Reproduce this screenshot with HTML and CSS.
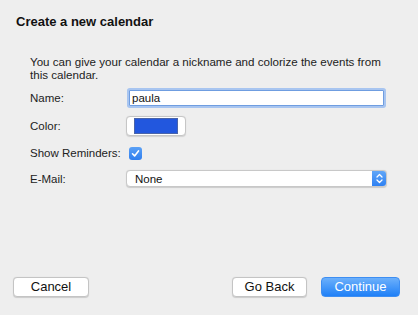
FILE: index.html
```html
<!DOCTYPE html>
<html>
<head>
<meta charset="utf-8">
<link rel="stylesheet" href="styles.css">
</head>
<body>
<div class="dialog">
  <div class="title">Create a new calendar</div>
  <div class="desc">You can give your calendar a nickname and colorize the events from this calendar.</div>
  <div class="form">
    <div class="label">Name:</div>
    <div class="cell"><div class="field">paula</div></div>
    <div class="label">Color:</div>
    <div class="cell"><div class="well"><div class="swatch"></div></div></div>
    <div class="label">Show Reminders:</div>
    <div class="cell"><div class="check"><svg width="13" height="13" viewBox="0 0 13 13"><path d="M3.5 6.8 L5.6 8.9 L9.5 3.9" fill="none" stroke="#fff" stroke-width="1.6" stroke-linecap="round" stroke-linejoin="round"/></svg></div></div>
    <div class="label">E-Mail:</div>
    <div class="cell"><div class="popup"><span class="popup-text">None</span><span class="stepper"><svg width="15" height="17" viewBox="0 0 15 17"><path d="M5 7 L7.5 4.5 L10 7 M5 10 L7.5 12.5 L10 10" fill="none" stroke="#fff" stroke-width="1.3" stroke-linecap="round" stroke-linejoin="round"/></svg></span></div></div>
  </div>
  <div class="footer">
    <div class="btn cancel">Cancel</div>
    <div class="btn back">Go Back</div>
    <div class="btn primary">Continue</div>
  </div>
</div>
</body>
</html>
```
FILE: styles.css
```css
html, body {
  margin: 0;
  padding: 0;
  background: #eeeeee;
}
body {
  font-family: "Liberation Sans", Arial, sans-serif;
  color: #1a1a1a;
}
.dialog {
  width: 418px;
  height: 315px;
  box-sizing: border-box;
  display: flex;
  flex-direction: column;
}
.title {
  margin: 14px 0 0 16px;
  font-size: 13px;
  font-weight: bold;
  line-height: 16px;
  color: #111;
}
.desc {
  margin-top: 26px;
  padding: 0 20px 0 30px;
  font-size: 11.6px;
  line-height: 12.5px;
  color: #222;
}
.form {
  margin-top: 7px;
  padding: 0 31px 0 30px;
  display: grid;
  grid-template-columns: 96px 1fr;
  grid-template-rows: 20px 20px 18px 17px;
  row-gap: 8px;
  font-size: 11.5px;
  color: #222;
}
.label {
  align-self: center;
  line-height: 14px;
}
.cell {
  display: flex;
  align-items: center;
}
.field {
  flex: 1;
  margin: 0 3px 0 3px;
  height: 16px;
  box-sizing: border-box;
  background: #fff;
  border: 1px solid #6f9de0;
  box-shadow: 0 0 0 2px #a8c5f0;
  border-radius: 1px;
  padding-left: 2px;
  font-size: 11.5px;
  line-height: 14px;
  color: #111;
}
.well {
  width: 60px;
  height: 20px;
  box-sizing: border-box;
  background: #fff;
  border: 1px solid #c6c6c6;
  border-radius: 4px;
  box-shadow: 0 0.5px 1px rgba(0,0,0,0.12);
  display: flex;
  align-items: center;
  justify-content: center;
}
.swatch {
  width: 44px;
  height: 16px;
  box-sizing: border-box;
  background: #2257de;
  border: 1px solid #4a64a8;
}
.check {
  width: 13px;
  height: 13px;
  margin-left: 3px;
  border-radius: 3px;
  background: linear-gradient(#5aa0f5, #2f7fef);
  display: flex;
}
.popup {
  flex: 1;
  height: 17px;
  box-sizing: border-box;
  background: #fff;
  border: 1px solid #c8c8c8;
  border-radius: 4px;
  box-shadow: 0 0.5px 1px rgba(0,0,0,0.15);
  display: flex;
  align-items: center;
  overflow: hidden;
}
.popup-text {
  flex: 1;
  padding-left: 8px;
  font-size: 11.5px;
  color: #111;
}
.stepper {
  width: 15px;
  height: 17px;
  margin-right: -1px;
  background: linear-gradient(#64a9f8, #2b7ef2);
  display: flex;
}
.footer {
  margin-top: auto;
  display: flex;
  padding: 0 18px 18px 13px;
}
.btn {
  height: 20px;
  box-sizing: border-box;
  border-radius: 4px;
  font-size: 13px;
  line-height: 18px;
  text-align: center;
  color: #111;
}
.cancel, .back {
  background: #fff;
  border: 1px solid #c4c4c4;
  box-shadow: 0 0.5px 1px rgba(0,0,0,0.15);
}
.cancel {
  width: 76px;
}
.back {
  width: 75px;
  margin-left: auto;
}
.primary {
  width: 79px;
  margin-left: 14px;
  color: #fff;
  background: linear-gradient(#6cb0fb, #1f80f7);
  border: 1px solid #3d8ef2;
}
```
